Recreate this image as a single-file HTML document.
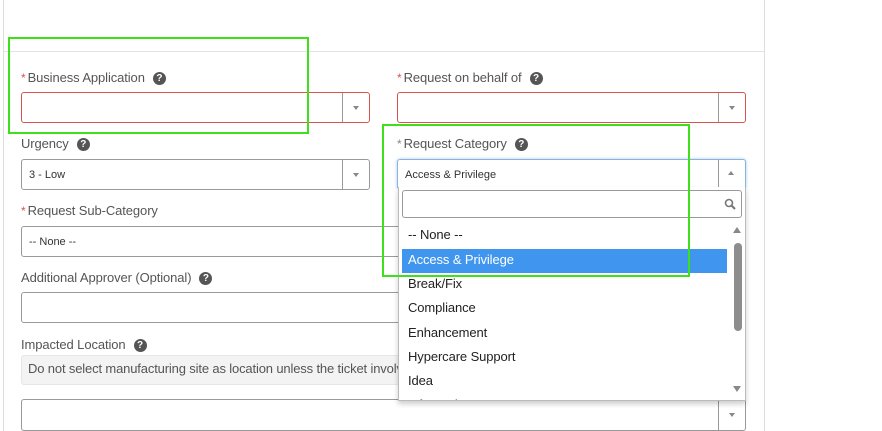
<!DOCTYPE html>
<html><head><style>
*{box-sizing:border-box;margin:0;padding:0}
body{width:882px;height:431px;overflow:hidden;background:#fff;font-family:"Liberation Sans",Arial,sans-serif;position:relative;color:#333}
.a{position:absolute}
.lbl{position:absolute;font-size:13px;color:#555;letter-spacing:-0.1px}
.req{color:#d9534f;font-size:12px;margin-right:2px}
.q{display:inline-block;width:13px;height:13px;border-radius:50%;background:#555;color:#fff;font-size:10px;font-weight:bold;text-align:center;line-height:13px;margin-left:8px;vertical-align:1px}
.box{position:absolute;border:1px solid #999;border-radius:3px;background:#fff;height:31px}
.red{border-color:#d9534f}
.arr{position:absolute;right:0;top:0;bottom:0;width:27px;border-left:1px solid #999}
.arr.dn:after{content:"";position:absolute;left:10px;top:13px;border:3.5px solid transparent;border-top:4px solid #888}
.val{position:absolute;left:7px;top:9px;font-size:11px;color:#333}
.item{position:absolute;left:9px;font-size:13px;color:#222;letter-spacing:-0.1px}
.g{position:absolute;border:2px solid #3ee01a}
</style></head><body>
<div class="a" style="left:3px;top:0;width:1px;height:431px;background:#ddd"></div>
<div class="a" style="left:764px;top:0;width:1px;height:431px;background:#ddd"></div>
<div class="a" style="left:3px;top:51px;width:761px;height:1px;background:#e3e3e3"></div>

<div class="lbl" style="left:21px;top:70px"><span class="req">*</span>Business Application<span class="q">?</span></div>
<div class="box red" style="left:21px;top:92px;width:349px"><div class="arr dn"></div></div>
<div class="lbl" style="left:397px;top:70px"><span class="req">*</span>Request on behalf of<span class="q">?</span></div>
<div class="box red" style="left:397px;top:92px;width:349px"><div class="arr dn"></div></div>

<div class="lbl" style="left:21px;top:136px">Urgency<span class="q">?</span></div>
<div class="box" style="left:21px;top:159px;width:349px"><span class="val">3 - Low</span><div class="arr dn"></div></div>
<div class="lbl" style="left:397px;top:136px"><span class="req" style="color:#888">*</span>Request Category<span class="q">?</span></div>

<div class="lbl" style="left:21px;top:203px"><span class="req">*</span>Request Sub-Category</div>
<div class="box" style="left:21px;top:226px;width:725px"><span class="val">-- None --</span><div class="arr dn"></div></div>

<div class="lbl" style="left:21px;top:270px">Additional Approver (Optional)<span class="q">?</span></div>
<div class="box" style="left:21px;top:292px;width:725px"></div>

<div class="lbl" style="left:21px;top:337px">Impacted Location<span class="q">?</span></div>
<div class="a" style="left:21px;top:355px;width:725px;height:30px;background:#f3f3f3;border:1px solid #e6e6e6;border-radius:3px;font-size:13px;color:#555;padding:5px 6px;letter-spacing:-0.15px">Do not select manufacturing site as location unless the ticket involves</div>
<div class="box" style="left:21px;top:399px;width:725px;height:32px"><div class="arr dn"></div></div>

<!-- open select -->
<div class="box" style="left:397px;top:159px;width:349px;height:29px;border-color:#8ab4e0;border-bottom:none;border-radius:3px 3px 0 0;box-shadow:0 0 3px #a8c8ee"><span class="val">Access &amp; Privilege</span><div class="arr"></div></div>
<div class="a" style="left:728px;top:171px;border-left:3.5px solid transparent;border-right:3.5px solid transparent;border-bottom:4px solid #888"></div>
<div class="a" style="left:398px;top:187px;width:348px;height:214px;background:#fff;border:1px solid #bbb;border-top:none;box-shadow:0 3px 5px rgba(0,0,0,.2);overflow:hidden">
 <div class="a" style="left:3px;top:3px;width:340px;height:28px;border:1px solid #999;border-radius:3px">
  <svg class="a" style="right:5px;top:7px" width="12" height="12" viewBox="0 0 12 12"><circle cx="5" cy="5" r="3.5" fill="none" stroke="#777" stroke-width="1.6"/><path d="M7.5 7.5L11 11" stroke="#777" stroke-width="2"/></svg>
 </div>
 <div class="item" style="top:40px">-- None --</div>
 <div class="a" style="left:3px;top:62px;width:325px;height:24px;background:#4096ee"></div>
 <div class="item" style="top:65px;color:#fff">Access &amp; Privilege</div>
 <div class="item" style="top:89px">Break/Fix</div>
 <div class="item" style="top:113px">Compliance</div>
 <div class="item" style="top:138px">Enhancement</div>
 <div class="item" style="top:162px">Hypercare Support</div>
 <div class="item" style="top:186px">Idea</div>
 <div class="item" style="top:210px">Information Request</div>
 <div class="a" style="left:334px;top:40px;border:4.5px solid transparent;border-bottom:6px solid #888;border-top:none"></div>
 <div class="a" style="left:335px;top:56px;width:8px;height:88px;background:#8d8d8d;border-radius:4px"></div>
 <div class="a" style="left:334px;top:199px;border:4.5px solid transparent;border-top:6px solid #888;border-bottom:none"></div>
</div>

<div class="g" style="left:8px;top:37px;width:301px;height:97px"></div>
<div class="g" style="left:382px;top:124px;width:308px;height:153px"></div>
</body></html>
